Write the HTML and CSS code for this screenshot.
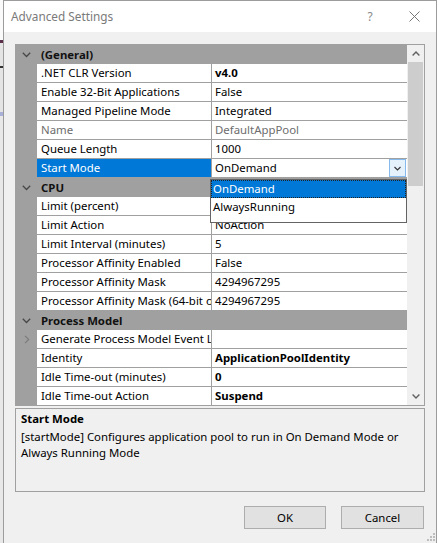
FILE: index.html
```html
<!DOCTYPE html>
<html>
<head>
<meta charset="utf-8">
<title>Advanced Settings</title>
<link rel="stylesheet" href="styles.css">
</head>
<body>
<div class="desktop">
  <div class="behind"></div>
  <div class="window">
    <div class="titlebar">
      <span class="title">Advanced Settings</span>
      <span class="help">?</span>
      <svg class="close" width="11" height="11" viewBox="0 0 11 11"><path d="M0.5 0.5l10 10M10.5 0.5l-10 10" stroke="#777" stroke-width="1" fill="none"/></svg>
    </div>
    <div class="client">
      <div class="grid">
        <div class="rows">
          <div class="cat"><span class="gut"><svg width="9" height="6" viewBox="0 0 9 6"><path d="M0.8 0.8l3.7 3.7 3.7-3.7" fill="none" stroke="#474747" stroke-width="1.3"/></svg></span><span class="catname">(General)</span></div>
          <div class="row"><span class="gut"></span><span class="name">.NET CLR Version</span><span class="val b">v4.0</span></div>
          <div class="row"><span class="gut"></span><span class="name">Enable 32-Bit Applications</span><span class="val">False</span></div>
          <div class="row"><span class="gut"></span><span class="name">Managed Pipeline Mode</span><span class="val">Integrated</span></div>
          <div class="row dis"><span class="gut"></span><span class="name">Name</span><span class="val">DefaultAppPool</span></div>
          <div class="row"><span class="gut"></span><span class="name">Queue Length</span><span class="val">1000</span></div>
          <div class="row sel"><span class="gut"></span><span class="name">Start Mode</span><span class="val"><span class="vtext">OnDemand</span><span class="ddbtn"><svg width="7" height="5" viewBox="0 0 7 5"><path d="M0.5 1l3 3 3-3" fill="none" stroke="#333" stroke-width="1.1"/></svg></span></span></div>
          <div class="cat"><span class="gut"><svg width="9" height="6" viewBox="0 0 9 6"><path d="M0.8 0.8l3.7 3.7 3.7-3.7" fill="none" stroke="#474747" stroke-width="1.3"/></svg></span><span class="catname">CPU</span></div>
          <div class="row"><span class="gut"></span><span class="name">Limit (percent)</span><span class="val">0</span></div>
          <div class="row"><span class="gut"></span><span class="name">Limit Action</span><span class="val">NoAction</span></div>
          <div class="row"><span class="gut"></span><span class="name">Limit Interval (minutes)</span><span class="val">5</span></div>
          <div class="row"><span class="gut"></span><span class="name">Processor Affinity Enabled</span><span class="val">False</span></div>
          <div class="row"><span class="gut"></span><span class="name">Processor Affinity Mask</span><span class="val">4294967295</span></div>
          <div class="row"><span class="gut"></span><span class="name">Processor Affinity Mask (64-bit option)</span><span class="val">4294967295</span></div>
          <div class="cat"><span class="gut"><svg width="9" height="6" viewBox="0 0 9 6"><path d="M0.8 0.8l3.7 3.7 3.7-3.7" fill="none" stroke="#474747" stroke-width="1.3"/></svg></span><span class="catname">Process Model</span></div>
          <div class="row"><span class="gut"><svg width="6" height="9" viewBox="0 0 6 9"><path d="M1 0.8l3.7 3.7L1 8.2" fill="none" stroke="#7c7c7c" stroke-width="1.2"/></svg></span><span class="name">Generate Process Model Event Log Entry</span><span class="val"></span></div>
          <div class="row"><span class="gut"></span><span class="name">Identity</span><span class="val b">ApplicationPoolIdentity</span></div>
          <div class="row"><span class="gut"></span><span class="name">Idle Time-out (minutes)</span><span class="val b">0</span></div>
          <div class="row"><span class="gut"></span><span class="name">Idle Time-out Action</span><span class="val b">Suspend</span></div>
        </div>
        <div class="vscroll">
          <div class="sbtn"><svg width="8" height="5" viewBox="0 0 8 5"><path d="M0.6 4.4l3.4-3.4 3.4 3.4" fill="none" stroke="#606060" stroke-width="1.4"/></svg></div>
          <div class="thumb"></div>
          <div class="track"></div>
          <div class="sbtn"><svg width="8" height="5" viewBox="0 0 8 5"><path d="M0.6 0.6l3.4 3.4 3.4-3.4" fill="none" stroke="#606060" stroke-width="1.4"/></svg></div>
        </div>
        <div class="dropdown">
          <div class="item on">OnDemand</div>
          <div class="item">AlwaysRunning</div>
        </div>
      </div>
      <div class="desc">
        <div class="dtitle">Start Mode</div>
        <div class="dtext">[startMode] Configures application pool to run in On Demand Mode or Always Running Mode</div>
      </div>
      <div class="buttons">
        <div class="btn ok">OK</div>
        <div class="btn cancel">Cancel</div>
      </div>
    </div>
    <svg class="grip" width="9" height="9" viewBox="0 0 9 9"><g fill="#bdbdbd"><rect x="7" y="1" width="2" height="2"/><rect x="4" y="4" width="2" height="2"/><rect x="7" y="4" width="2" height="2"/><rect x="1" y="7" width="2" height="2"/><rect x="4" y="7" width="2" height="2"/><rect x="7" y="7" width="2" height="2"/></g></svg>
  </div>
</div>
</body>
</html>
```

FILE: styles.css
```css
* { box-sizing: border-box; }
html, body { margin: 0; padding: 0; }
body {
  width: 439px;
  height: 543px;
  overflow: hidden;
  background: #ffffff;
  font-family: "Noto Sans", "Open Sans", sans-serif;
  font-size: 11.4px;
  color: #000;
}
.desktop { display: flex; height: 543px; }
.behind {
  width: 3px;
  flex: none;
  background: linear-gradient(to bottom, #fafafa 0, #fafafa 40px, #5a2d4a 40px, #5a2d4a 43px, #e4e4e4 43px, #e4e4e4 66px, #333 66px, #333 68px, #e4e4e4 68px, #e4e4e4 112px, #a8b0d8 112px, #a8b0d8 116px, #e8e8e8 116px);
}
.window {
  width: 434px;
  height: 543px;
  flex: none;
  border: 1px solid #9c9c9c;
  border-bottom: none;
  background: #f0f0f0;
  display: flex;
  flex-direction: column;
  position: relative;
}
.titlebar {
  height: 31px;
  flex: none;
  background: #fff;
  display: flex;
  align-items: center;
  padding: 0 16px 0 7px;
}
.title { flex: 1; color: #7a7a7a; font-size: 11.8px; padding-bottom: 1px; }
.help { color: #8a8a8a; font-size: 12px; width: 6px; margin-right: 36px; text-align: center; padding-bottom: 1px; }
.close { display: block; }

.client { padding: 12px 11px 0 11px; display: flex; flex-direction: column; }

.grid {
  width: 410px;
  height: 362px;
  border: 1px solid #a0a0a0;
  background: #fff;
  display: flex;
  position: relative;
}
.rows { flex: 1; overflow: hidden; }
.row, .cat { display: flex; height: 19px; }
.gut {
  width: 21px;
  flex: none;
  background: #a0a0a0;
  display: flex;
  align-items: center;
  justify-content: center;
}
.gut svg { display: block; }
.cat { background: #a0a0a0; }
.catname { font-weight: bold; line-height: 19px; padding-left: 4px; color: #111; }
.name {
  width: 175px;
  flex: none;
  border-right: 1px solid #a0a0a0;
  border-bottom: 1px solid #a0a0a0;
  padding-left: 4px;
  line-height: 18px;
  white-space: nowrap;
  overflow: hidden;
}
.val {
  flex: 1;
  display: flex;
  align-items: center;
  border-bottom: 1px solid #a0a0a0;
  padding-left: 3px;
  line-height: 18px;
  white-space: nowrap;
  overflow: hidden;
}
.val.b { font-weight: bold; }
.dis .name, .dis .val { color: #6d6d6d; }
.sel .name { background: #0078d7; color: #fff; }
.vtext { flex: 1; }
.ddbtn {
  width: 17px;
  height: 18px;
  margin-right: 1px;
  border: 1px solid #86b9ec;
  background: #e5f1fb;
  display: flex;
  align-items: center;
  justify-content: center;
}
.ddbtn svg { display: block; }

.vscroll {
  width: 17px;
  flex: none;
  background: #f0f0f0;
  display: flex;
  flex-direction: column;
}
.sbtn { height: 17px; flex: none; display: flex; align-items: center; justify-content: center; }
.sbtn svg { display: block; }
.thumb { height: 124px; margin: 0 1px; background: #cdcdcd; flex: none; }
.track { flex: 1; }

.dropdown {
  position: absolute;
  left: 194px;
  top: 134px;
  width: 197px;
  height: 44px;
  border: 1px solid #646464;
  background: #fff;
}
.item { height: 18px; line-height: 18px; padding-left: 2px; white-space: nowrap; }
.item.on {
  background: #0078d7;
  color: #fff;
  outline: 1px dotted #222;
  outline-offset: -1px;
}

.desc {
  margin-top: 2px;
  width: 410px;
  height: 84px;
  border: 1px solid #a0a0a0;
  padding: 2px 5px;
}
.dtitle { font-weight: bold; line-height: 16px; margin-bottom: 2px; }
.dtext { line-height: 16px; }

.buttons {
  margin-top: 14px;
  width: 410px;
  display: flex;
  justify-content: flex-end;
  gap: 15px;
  padding-right: 1px;
}
.btn {
  height: 23px;
  background: #e1e1e1;
  border: 1px solid #adadad;
  display: flex;
  align-items: center;
  justify-content: center;
  padding-bottom: 1px;
}
.btn.ok { width: 82px; }
.btn.cancel { width: 83px; }

.grip { position: absolute; right: 1px; bottom: 2px; display: block; }
```
